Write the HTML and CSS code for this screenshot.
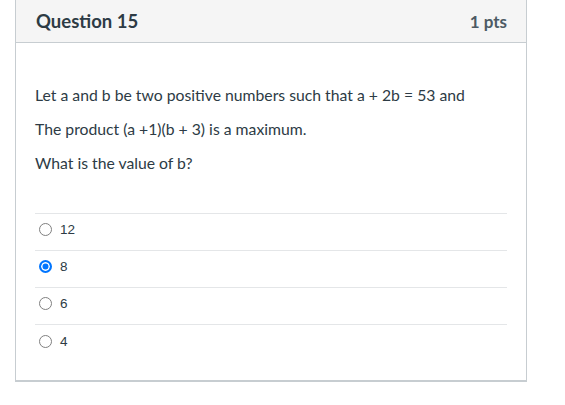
FILE: index.html
```html
<!DOCTYPE html>
<html>
<head>
<meta charset="utf-8">
<link rel="stylesheet" href="styles.css">
</head>
<body>
<div class="card">
  <div class="header">
    <span class="title">Question 15</span>
    <span class="pts">1 pts</span>
  </div>
  <div class="content">
    <div class="qtext">
      <p>Let a and b be two positive numbers such that a + 2b = 53 and</p>
      <p>The product (a +1)(b + 3) is a maximum.</p>
      <p>What is the value of b?</p>
    </div>
    <div class="answers">
      <label class="answer"><span class="radio"></span><span class="label">12</span></label>
      <label class="answer"><span class="radio checked"></span><span class="label">8</span></label>
      <label class="answer"><span class="radio"></span><span class="label">6</span></label>
      <label class="answer"><span class="radio"></span><span class="label">4</span></label>
    </div>
  </div>
</div>
</body>
</html>
```
FILE: styles.css
```css
html, body { margin: 0; padding: 0; background: #fff; }
body { font-family: Lato, "Noto Sans", sans-serif; color: #2d3b45; }
.card {
  margin-left: 15px;
  margin-top: -1px;
  width: 510px;
  border: 1px solid #c7cdd1;
  border-bottom-width: 2px;
}
.header {
  height: 43px;
  box-sizing: border-box;
  background: #f5f5f5;
  border-bottom: 1px solid #c7cdd1;
  display: flex;
  align-items: center;
  justify-content: space-between;
  padding: 0 19px 0 20px;
}
.title { font-weight: 700; font-size: 18.5px; }
.pts { font-weight: 700; font-size: 17px; color: #4c5a64; }
.content { padding: 43px 19px 18px 19px; }
.qtext { font-size: 15.75px; }
.qtext p { margin: 0 0 16px 0; line-height: 18px; }
.answers { margin-top: 41px; border-top: 1px solid #e4e6e8; }
.answer {
  display: flex;
  align-items: center;
  height: 37px;
  box-sizing: border-box;
  padding-bottom: 5px;
  border-bottom: 1px solid #e4e6e8;
  font-family: "Liberation Sans", Arial, sans-serif;
  font-size: 13.5px;
  color: #2d3b45;
}
.answer:last-child { border-bottom: none; height: 37px; }
.radio {
  width: 13px; height: 13px;
  border: 1px solid #808080;
  border-radius: 50%;
  margin-left: 4px;
  margin-right: 8px;
  box-sizing: border-box;
  background: #fff;
}
.radio.checked {
  border: 2px solid #0075ff;
  box-shadow: inset 0 0 0 1.5px #fff;
  background: #0075ff;
}
```
